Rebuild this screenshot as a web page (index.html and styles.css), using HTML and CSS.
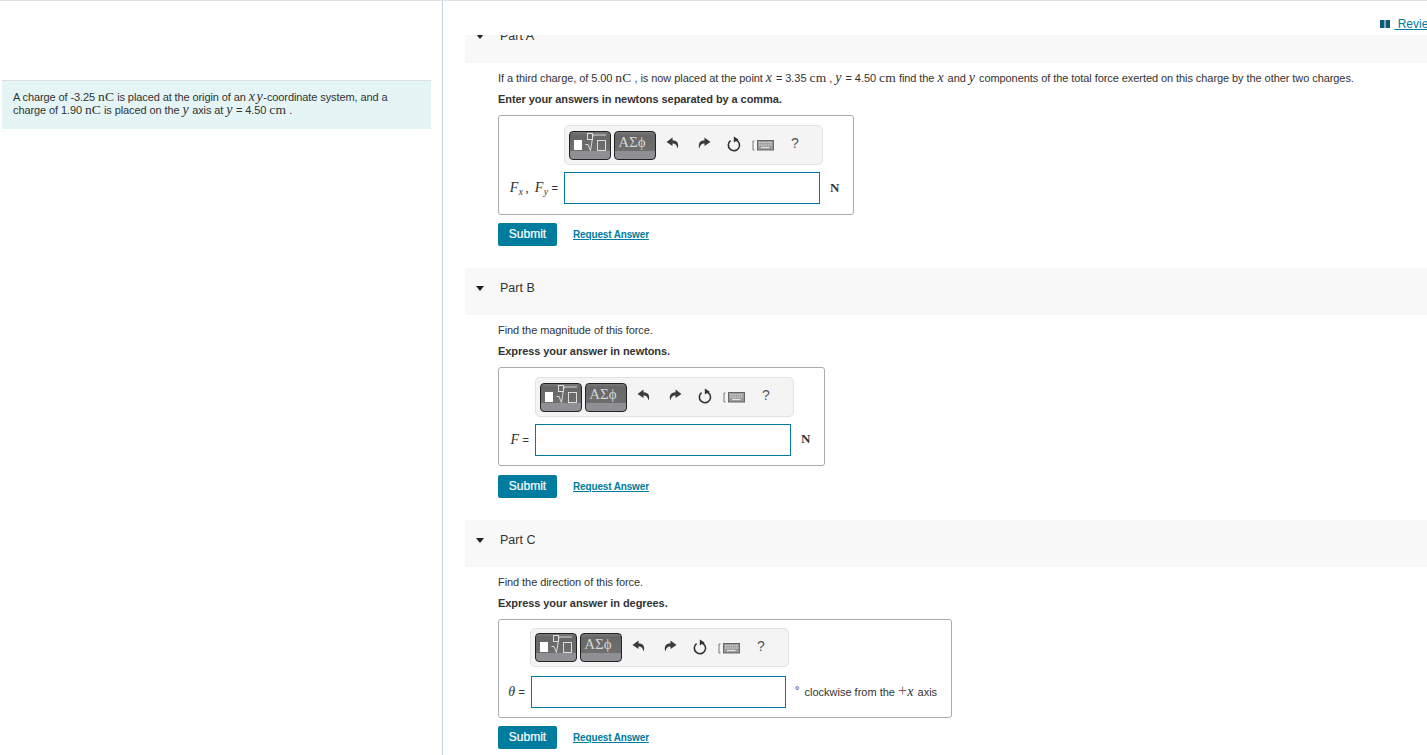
FILE: index.html
```html
<!DOCTYPE html>
<html lang="en">
<head>
    <meta charset="UTF-8">
    <meta name="viewport" content="width=device-width, initial-scale=1.0">
    <title>Part A</title>
    <link rel="stylesheet" href="styles.css">
</head>
<body>
    <svg class="defs" width="0" height="0" aria-hidden="true">
        <symbol id="ico-templates" viewBox="0 0 40 27">
            <rect x="4" y="8" width="8" height="10" fill="#fff"/>
            <rect x="17.5" y="1.5" width="5" height="6" fill="none" stroke="#ddd" stroke-width="1"/>
            <path d="M15.5 12.5 h2.5 l2.5 6 l2.5 -15.5 h13" fill="none" stroke="#ddd" stroke-width="1"/>
            <rect x="27.5" y="8.5" width="8" height="10" fill="none" stroke="#ddd" stroke-width="1"/>
        </symbol>
        <symbol id="ico-undo" viewBox="0 0 14 14">
            <path d="M6.5 1.5 L0.5 6 L6.5 10 V7.6 C9 7.6 10.6 8.6 11.6 12.6 C13.2 8 11.6 4.4 6.5 4.2 Z" fill="#3c3c3c"/>
        </symbol>
        <symbol id="ico-redo" viewBox="0 0 14 14">
            <path d="M7.5 1.5 L13.5 6 L7.5 10 V7.6 C5 7.6 3.4 8.6 2.4 12.6 C0.8 8 2.4 4.4 7.5 4.2 Z" fill="#3c3c3c"/>
        </symbol>
        <symbol id="ico-reset" viewBox="0 0 14 16">
            <path d="M3.6 4.6 A5.6 5.6 0 1 0 9 3.9" fill="none" stroke="#333" stroke-width="1.6"/>
            <path d="M6.8 0.4 L11.6 3.6 L6.8 6.6 Z" fill="#333"/>
        </symbol>
        <symbol id="ico-keyboard" viewBox="0 0 22 12">
            <path d="M2.5 2 H1 V11 H2.5" fill="none" stroke="#777" stroke-width="1"/>
            <rect x="5.5" y="1.5" width="16" height="9.5" fill="#999" stroke="#666" stroke-width="1"/>
            <path d="M7 3.7 H20 M7 6 H20" stroke="#e4e4e4" stroke-width="1" stroke-dasharray="1.5 .7"/>
            <path d="M9 8.5 H17.5" stroke="#e4e4e4" stroke-width="1.2"/>
        </symbol>
    </svg>

    <div class="page">
        <aside class="left-panel">
            <div class="intro">
                A charge of -3.25 <span class="unit">nC</span> is placed at the origin of an <i class="var">xy</i>-coordinate system, and a charge of 1.90 <span class="unit">nC</span> is placed on the <i class="var">y</i> axis at <i class="var">y</i> = 4.50 <span class="unit">cm</span> .
            </div>
        </aside>

        <main class="right-panel">
            <div class="top-links">
                <a class="review-link" href="#">
                    <svg class="book" width="10" height="8" viewBox="0 0 10 8"><path d="M0 0 H4.5 V8 H0 Z M5.5 0 H10 V8 H5.5 Z" fill="#0b5d75"/></svg>
                    <span class="review-text">&nbsp;Review</span>
                </a>
            </div>

            <div class="parts">
                <section class="part">
                    <div class="part-head"><span class="caret"></span>Part A</div>
                    <div class="part-body">
                        <p class="question">If a third charge, of 5.00 <span class="unit">nC</span> , is now placed at the point <i class="var">x</i> = 3.35 <span class="unit">cm</span> , <i class="var">y</i> = 4.50 <span class="unit">cm</span> find the <i class="var">x</i> and <i class="var">y</i> components of the total force exerted on this charge by the other two charges.</p>
                        <p class="hint">Enter your answers in newtons separated by a comma.</p>
                        <div class="answer-box box-a">
                            <div class="toolbar">
                                <span class="tool-btn tool-templates"><svg width="40" height="27"><use href="#ico-templates"/></svg></span>
                                <span class="tool-btn tool-symbols">ΑΣϕ</span>
                                <span class="tool-icons">
                                    <svg class="i-undo" width="14" height="14"><use href="#ico-undo"/></svg>
                                    <svg class="i-redo" width="14" height="14"><use href="#ico-redo"/></svg>
                                    <svg class="i-reset" width="14" height="16"><use href="#ico-reset"/></svg>
                                    <svg class="i-keys" width="22" height="12"><use href="#ico-keyboard"/></svg>
                                    <span class="i-help">?</span>
                                </span>
                            </div>
                            <div class="answer-row">
                                <span class="answer-label"><i class="var">F<sub>x</sub></i><span class="comma">,</span><i class="var">F<sub>y</sub></i> =</span>
                                <span class="answer-input"></span>
                                <span class="answer-unit">N</span>
                            </div>
                        </div>
                        <div class="actions">
                            <button class="submit">Submit</button>
                            <a class="request" href="#">Request Answer</a>
                        </div>
                    </div>
                </section>

                <section class="part">
                    <div class="part-head"><span class="caret"></span>Part B</div>
                    <div class="part-body">
                        <p class="question">Find the magnitude of this force.</p>
                        <p class="hint">Express your answer in newtons.</p>
                        <div class="answer-box box-b">
                            <div class="toolbar">
                                <span class="tool-btn tool-templates"><svg width="40" height="27"><use href="#ico-templates"/></svg></span>
                                <span class="tool-btn tool-symbols">ΑΣϕ</span>
                                <span class="tool-icons">
                                    <svg class="i-undo" width="14" height="14"><use href="#ico-undo"/></svg>
                                    <svg class="i-redo" width="14" height="14"><use href="#ico-redo"/></svg>
                                    <svg class="i-reset" width="14" height="16"><use href="#ico-reset"/></svg>
                                    <svg class="i-keys" width="22" height="12"><use href="#ico-keyboard"/></svg>
                                    <span class="i-help">?</span>
                                </span>
                            </div>
                            <div class="answer-row">
                                <span class="answer-label"><i class="var">F</i> =</span>
                                <span class="answer-input"></span>
                                <span class="answer-unit">N</span>
                            </div>
                        </div>
                        <div class="actions">
                            <button class="submit">Submit</button>
                            <a class="request" href="#">Request Answer</a>
                        </div>
                    </div>
                </section>

                <section class="part">
                    <div class="part-head"><span class="caret"></span>Part C</div>
                    <div class="part-body">
                        <p class="question">Find the direction of this force.</p>
                        <p class="hint">Express your answer in degrees.</p>
                        <div class="answer-box box-c">
                            <div class="toolbar">
                                <span class="tool-btn tool-templates"><svg width="40" height="27"><use href="#ico-templates"/></svg></span>
                                <span class="tool-btn tool-symbols">ΑΣϕ</span>
                                <span class="tool-icons">
                                    <svg class="i-undo" width="14" height="14"><use href="#ico-undo"/></svg>
                                    <svg class="i-redo" width="14" height="14"><use href="#ico-redo"/></svg>
                                    <svg class="i-reset" width="14" height="16"><use href="#ico-reset"/></svg>
                                    <svg class="i-keys" width="22" height="12"><use href="#ico-keyboard"/></svg>
                                    <span class="i-help">?</span>
                                </span>
                            </div>
                            <div class="answer-row">
                                <span class="answer-label"><i class="var">θ</i> =</span>
                                <span class="answer-input"></span>
                                <span class="answer-note"><span class="deg">°</span> clockwise from the <span class="unit plus">+</span><i class="var">x</i> axis</span>
                            </div>
                        </div>
                        <div class="actions">
                            <button class="submit">Submit</button>
                            <a class="request" href="#">Request Answer</a>
                        </div>
                    </div>
                </section>
            </div>
        </main>
    </div>
</body>
</html>
```

FILE: styles.css
```css
html, body {
    height: 100%;
}

body {
    margin: 0;
    overflow: hidden;
    font-family: 'Liberation Sans', Arial, sans-serif;
    font-size: 11px;
    color: #333;
    background: #fff;
}

.defs {
    position: absolute;
}

.page {
    display: flex;
    height: 755px;
    border-top: 1px solid #e0e0e0;
    box-sizing: border-box;
}

.left-panel {
    width: 443px;
    flex: none;
    box-sizing: border-box;
    padding: 79px 11px 0 2px;
    border-right: 1px solid #c3d3e3;
}

.intro {
    height: 49px;
    box-sizing: border-box;
    padding: 10px 30px 0 11px;
    background: #e5f5f6;
    border-top: 1px solid #ddd;
    line-height: 13px;
    letter-spacing: -0.1px;
}

.intro .var {
    letter-spacing: 1.6px;
    margin-right: -1px;
}

.unit {
    font-family: 'Liberation Serif', serif;
    font-size: 13.5px;
    line-height: 0;
    letter-spacing: 0.2px;
}

.var {
    font-family: 'Liberation Serif', serif;
    font-style: italic;
    font-size: 14px;
    line-height: 0;
    letter-spacing: 1px;
}

.right-panel {
    flex: 1;
    min-width: 0;
    overflow: hidden;
}

.top-links {
    height: 34px;
    display: flex;
    justify-content: flex-end;
    overflow: hidden;
}

.review-link {
    margin: 16px -10px 0 0;
    color: #007c9e;
    font-size: 12px;
    height: 14px;
    display: flex;
    align-items: center;
    text-decoration: none;
}

.book {
    margin-right: 4px;
}

.review-text {
    text-decoration: underline;
}

.parts {
    height: 720px;
    overflow: hidden;
    padding-left: 22px;
}

.part {
    height: 252px;
}

.part:first-child {
    margin-top: -19px;
}

.part-head {
    height: 47px;
    box-sizing: border-box;
    display: flex;
    align-items: center;
    background: #f8f8f8;
    font-size: 12.5px;
    padding: 0 0 7px 35px;
    position: relative;
}

.caret {
    position: absolute;
    left: 11px;
    top: 18px;
    border-left: 4.5px solid transparent;
    border-right: 4.5px solid transparent;
    border-top: 5px solid #222;
}

.part-body {
    padding: 8px 0 0 33px;
}

.question {
    margin: 0;
    height: 21px;
    line-height: 14px;
    letter-spacing: -0.07px;
    white-space: nowrap;
}

.hint {
    margin: 0 0 8px;
    height: 15px;
    line-height: 15px;
    font-weight: bold;
    letter-spacing: -0.07px;
}

.answer-box {
    box-sizing: border-box;
    height: 100px;
    border: 1px solid #aaa;
    border-radius: 3px;
}

.box-a {
    width: 356px;
    padding: 9px 0 0 65px;
}

.box-b {
    width: 327px;
    height: 99px;
    padding: 9px 0 0 36px;
}

.box-b + .actions {
    margin-top: 9px;
}

.box-c {
    width: 454px;
    height: 99px;
    padding: 8px 0 0 31px;
}

.toolbar {
    width: 259px;
    height: 40px;
    box-sizing: border-box;
    background: #f4f4f4;
    border: 1px solid #e2e2e2;
    border-radius: 5px;
    display: flex;
    align-items: center;
    padding-left: 4px;
    gap: 3px;
}

.box-c .toolbar {
    height: 39px;
}

.tool-btn {
    box-sizing: border-box;
    height: 29px;
    width: 42px;
    flex: none;
    border: 1px solid #222;
    border-radius: 4px;
    background: linear-gradient(#7a7a7b 0, #676768 12%, #6f6f70 70%, #909094 70%, #909094 100%);
    display: flex;
    overflow: hidden;
}

.tool-templates svg {
    flex: none;
}

.tool-symbols {
    justify-content: center;
    padding-right: 6px;
    font-family: 'Liberation Serif', serif;
    font-size: 15px;
    line-height: 20px;
    color: #d4d4d4;
}

.tool-icons {
    position: relative;
    flex: 1;
    height: 100%;
}

.tool-icons svg,
.i-help {
    position: absolute;
}

.i-undo { left: 7px; top: 10px; }
.i-redo { left: 38px; top: 10px; }
.i-reset { left: 68px; top: 10px; }
.i-keys { left: 93px; top: 13px; }

.i-help {
    left: 132px;
    top: 9px;
    font-size: 14px;
    color: #555;
}

.answer-row {
    display: flex;
    align-items: center;
    margin-top: 7px;
    position: relative;
}

.box-c .answer-row {
    margin: 9px 0 0 1px;
}

.answer-label {
    position: absolute;
    right: 100%;
    margin-right: 6px;
    white-space: nowrap;
}

.answer-label .var {
    letter-spacing: 0.5px;
}

.answer-label sub {
    font-size: 9.5px;
    line-height: 0;
    vertical-align: -3px;
}

.comma {
    font-family: 'Liberation Serif', serif;
    font-size: 13px;
    margin: 0 6px 0 2px;
}

.answer-input {
    width: 256px;
    height: 32px;
    box-sizing: border-box;
    border: 1px solid #007c9e;
    background: #fff;
    flex: none;
}

.box-c .answer-input {
    width: 255px;
}

.answer-unit {
    margin-left: 10px;
    font-family: 'Liberation Serif', serif;
    font-weight: bold;
    font-size: 13px;
}

.box-b .answer-unit {
    margin-bottom: 2px;
}

.answer-note {
    margin-left: 9px;
    white-space: nowrap;
}

.deg {
    display: inline-block;
    margin-right: 2px;
    vertical-align: 2px;
    line-height: 0;
}

.plus {
    font-size: 16px;
    color: #8a5a5a;
}

.actions {
    display: flex;
    align-items: center;
    margin-top: 8px;
}

.submit {
    width: 59px;
    height: 23px;
    padding: 0 0 2px;
    border: none;
    border-radius: 2px;
    background: #007c9e;
    color: #fff;
    font-family: 'Liberation Sans', Arial, sans-serif;
    font-size: 12px;
    -webkit-text-stroke: 0.2px #fff;
}

.request {
    margin-left: 16px;
    color: #007c9e;
    font-size: 10px;
    font-weight: bold;
    letter-spacing: -0.15px;
}
```
